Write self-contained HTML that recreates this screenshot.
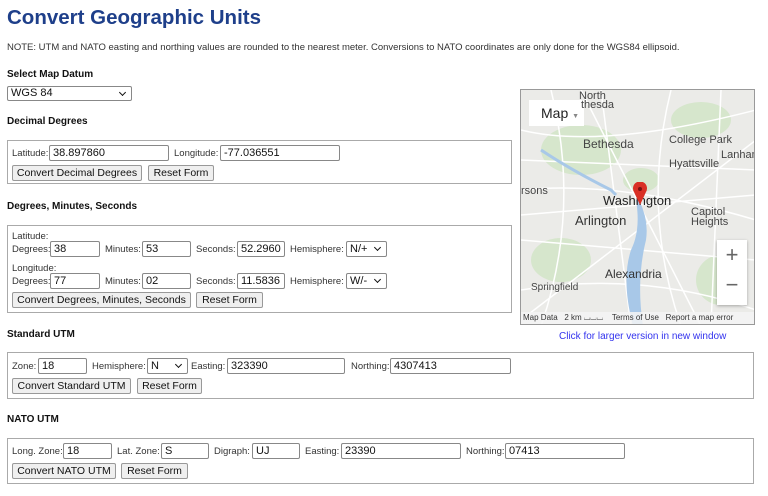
<!DOCTYPE html>
<html><head><style>
*{box-sizing:border-box;margin:0;padding:0}
body{width:768px;height:496px;background:#fff;font-family:"Liberation Sans",sans-serif;position:relative;overflow:hidden;color:#222}
.a{position:absolute;white-space:nowrap}
.l{font-size:9.5px;color:#333;line-height:12px}
.b{font-size:10px;font-weight:bold;color:#111}
.i{position:absolute;border:1px solid #888;border-radius:2px;background:#fff;font-size:11px;line-height:14px;padding:0 3px;color:#111;height:16px}
.btn{position:absolute;border:1px solid #999;border-radius:2px;background:#efefef;font-size:10.5px;line-height:14px;text-align:center;color:#111;height:16px;white-space:nowrap}
.fs{position:absolute;border:1px solid #aaa}
.sel::after{content:"";position:absolute;right:6px;top:3px;width:4px;height:4px;border-right:1.5px solid #111;border-bottom:1.5px solid #111;transform:rotate(45deg)}
.m{position:absolute;font-size:11px;color:#444;white-space:nowrap}
</style></head><body>
<div class="a" style="left:7px;top:6px;font-size:20.5px;font-weight:bold;color:#1e3f8a">Convert Geographic Units</div>
<div class="a l" style="left:7px;top:42px">NOTE: UTM and NATO easting and northing values are rounded to the nearest meter. Conversions to NATO coordinates are only done for the WGS84 ellipsoid.</div>
<div class="a b" style="left:7px;top:69px">Select Map Datum</div>
<div class="i sel" style="left:7px;top:86px;width:125px;height:15px;line-height:13px">WGS 84</div>
<div class="a b" style="left:7px;top:116px">Decimal Degrees</div>

<div class="fs" style="left:7px;top:140px;width:505px;height:44px"></div>
<div class="a l" style="left:12px;top:148px">Latitude:</div><div class="i" style="left:49px;top:145px;width:120px">38.897860</div>
<div class="a l" style="left:174px;top:148px">Longitude:</div><div class="i" style="left:220px;top:145px;width:120px">-77.036551</div>
<div class="btn" style="left:12px;top:165px;width:130px">Convert Decimal Degrees</div>
<div class="btn" style="left:148px;top:165px;width:66px">Reset Form</div>

<div class="a b" style="left:7px;top:201px">Degrees, Minutes, Seconds</div>
<div class="fs" style="left:7px;top:225px;width:505px;height:88px"></div>
<div class="a l" style="left:12px;top:231px">Latitude:</div>
<div class="a l" style="left:12px;top:244px">Degrees:</div><div class="i" style="left:50px;top:241px;width:50px">38</div>
<div class="a l" style="left:105px;top:244px">Minutes:</div><div class="i" style="left:142px;top:241px;width:49px">53</div>
<div class="a l" style="left:196px;top:244px">Seconds:</div><div class="i" style="left:237px;top:241px;width:48px">52.2960</div>
<div class="a l" style="left:290px;top:244px">Hemisphere:</div><div class="i sel" style="left:346px;top:241px;width:41px">N/+</div>
<div class="a l" style="left:12px;top:263px">Longitude:</div>
<div class="a l" style="left:12px;top:276px">Degrees:</div><div class="i" style="left:50px;top:273px;width:50px">77</div>
<div class="a l" style="left:105px;top:276px">Minutes:</div><div class="i" style="left:142px;top:273px;width:49px">02</div>
<div class="a l" style="left:196px;top:276px">Seconds:</div><div class="i" style="left:237px;top:273px;width:48px">11.5836</div>
<div class="a l" style="left:290px;top:276px">Hemisphere:</div><div class="i sel" style="left:346px;top:273px;width:41px">W/-</div>
<div class="btn" style="left:12px;top:292px;width:179px">Convert Degrees, Minutes, Seconds</div>
<div class="btn" style="left:196px;top:292px;width:67px">Reset Form</div>

<div class="a b" style="left:7px;top:329px">Standard UTM</div>
<div class="fs" style="left:7px;top:352px;width:747px;height:47px"></div>
<div class="a l" style="left:12px;top:361px">Zone:</div><div class="i" style="left:38px;top:358px;width:49px">18</div>
<div class="a l" style="left:92px;top:361px">Hemisphere:</div><div class="i sel" style="left:147px;top:358px;width:41px">N</div>
<div class="a l" style="left:191px;top:361px">Easting:</div><div class="i" style="left:227px;top:358px;width:118px">323390</div>
<div class="a l" style="left:351px;top:361px">Northing:</div><div class="i" style="left:390px;top:358px;width:121px">4307413</div>
<div class="btn" style="left:12px;top:378px;width:119px">Convert Standard UTM</div>
<div class="btn" style="left:137px;top:378px;width:65px">Reset Form</div>

<div class="a b" style="left:7px;top:414px">NATO UTM</div>
<div class="fs" style="left:7px;top:438px;width:747px;height:46px"></div>
<div class="a l" style="left:12px;top:446px">Long. Zone:</div><div class="i" style="left:63px;top:443px;width:49px">18</div>
<div class="a l" style="left:117px;top:446px">Lat. Zone:</div><div class="i" style="left:161px;top:443px;width:48px">S</div>
<div class="a l" style="left:214px;top:446px">Digraph:</div><div class="i" style="left:252px;top:443px;width:48px">UJ</div>
<div class="a l" style="left:305px;top:446px">Easting:</div><div class="i" style="left:341px;top:443px;width:120px">23390</div>
<div class="a l" style="left:466px;top:446px">Northing:</div><div class="i" style="left:505px;top:443px;width:120px">07413</div>
<div class="btn" style="left:12px;top:463px;width:104px">Convert NATO UTM</div>
<div class="btn" style="left:121px;top:463px;width:67px">Reset Form</div>

<div style="position:absolute;left:520px;top:89px;width:235px;height:236px;border:1px solid #999;background:#ebebe8;overflow:hidden">
<svg width="235" height="236" style="position:absolute;left:0;top:0">
<g fill="#d6e6cc"><ellipse cx="60" cy="60" rx="40" ry="25"/><ellipse cx="180" cy="30" rx="30" ry="18"/><ellipse cx="40" cy="170" rx="30" ry="22"/><ellipse cx="200" cy="190" rx="25" ry="25"/><ellipse cx="120" cy="90" rx="18" ry="12"/></g>
<g stroke="#fff" stroke-width="1.5" fill="none">
<path d="M0 40 Q80 60 235 20"/><path d="M0 100 Q100 90 235 130"/><path d="M30 0 Q60 120 20 236"/><path d="M150 0 Q120 120 160 236"/><path d="M0 150 L235 170"/><path d="M80 0 L110 236"/><path d="M0 200 Q120 180 235 220"/><path d="M200 0 L190 236"/><path d="M0 70 L235 80"/><path d="M0 125 L235 105"/><path d="M60 0 L180 236"/><path d="M235 50 L0 230"/>
</g>
<path d="M115 110 Q120 140 110 160 Q100 190 112 236 L122 236 Q115 190 125 150 Q128 130 118 110Z" fill="#a8c8e8"/>
<path d="M20 60 Q50 80 90 100 L95 105" stroke="#a8c8e8" stroke-width="3" fill="none"/>
</svg>
<div style="position:absolute;left:8px;top:10px;width:55px;height:26px;background:#fff;font-size:14px;font-weight:500;color:#222;padding:5px 0 0 12px">Map <span style="font-size:7px;color:#888">▼</span></div>
<div class="m" style="left:58px;top:0px">North</div><div class="m" style="left:60px;top:9px">thesda</div>
<div class="m" style="left:62px;top:47px;font-size:12px">Bethesda</div>
<div class="m" style="left:148px;top:44px">College Park</div>
<div class="m" style="left:148px;top:68px">Hyattsville</div>
<div class="m" style="left:200px;top:59px">Lanham</div>
<div class="m" style="left:0;top:95px">rsons</div>
<div class="m" style="left:82px;top:103px;font-size:13px;color:#222">Washington</div>
<div class="m" style="left:54px;top:123px;font-size:13px;color:#333">Arlington</div>
<div class="m" style="left:170px;top:116px">Capitol</div><div class="m" style="left:170px;top:126px">Heights</div>
<div class="m" style="left:84px;top:177px;font-size:12px;color:#333">Alexandria</div>
<div class="m" style="left:10px;top:192px;font-size:10px">Springfield</div>
<svg width="16" height="24" style="position:absolute;left:111px;top:92px"><path d="M8 23 L2 10 A7 7 0 1 1 14 10Z" fill="#d93025"/><circle cx="8" cy="7" r="2" fill="#7a1010"/></svg>
<div style="position:absolute;left:196px;top:150px;width:30px;height:65px;background:#fff;box-shadow:0 1px 3px rgba(0,0,0,.3)"><div style="font-size:22px;color:#666;text-align:center;line-height:30px">+</div><div style="font-size:22px;color:#666;text-align:center;line-height:30px">−</div></div>
<div style="position:absolute;left:0;bottom:0;width:235px;height:12px;background:rgba(245,245,245,.85);font-size:8px;color:#333;line-height:12px;padding-left:2px;white-space:nowrap">Map Data &nbsp; 2 km ⌴⌴⌴ &nbsp;&nbsp; Terms of Use &nbsp; Report a map error</div>
</div>
<div class="a" style="left:559px;top:331px;font-size:10px;color:#3333ee">Click for larger version in new window</div>
</body></html>
